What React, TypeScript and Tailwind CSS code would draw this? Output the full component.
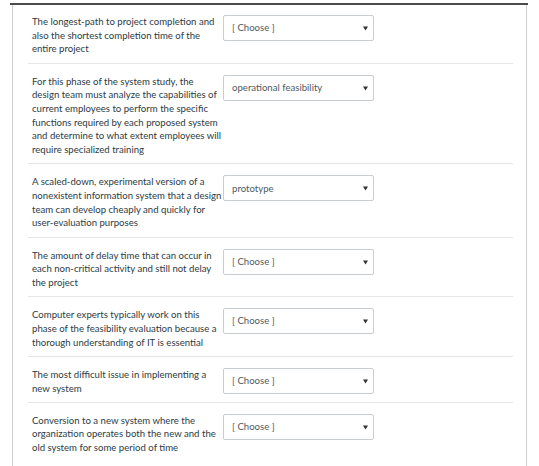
import React from 'react';

const ROWS: Array<{ text: string; answer: string }> = [
  {
    text: 'The longest-path to project completion and also the shortest completion time of the entire project',
    answer: '[ Choose ]',
  },
  {
    text: 'For this phase of the system study, the\ndesign team must analyze the capabilities of current employees to perform the specific functions required by each proposed system and determine to what extent employees will require specialized training',
    answer: 'operational feasibility',
  },
  {
    text: 'A scaled-down, experimental version of a nonexistent information system that a design team can develop cheaply and quickly for user-evaluation purposes',
    answer: 'prototype',
  },
  {
    text: 'The amount of delay time that can occur in each non-critical activity and still not delay the project',
    answer: '[ Choose ]',
  },
  {
    text: 'Computer experts typically work on this phase of the feasibility evaluation because a thorough understanding of IT is essential',
    answer: '[ Choose ]',
  },
  {
    text: 'The most difficult issue in implementing a new system',
    answer: '[ Choose ]',
  },
  {
    text: 'Conversion to a new system where the organization operates both the new and the old system for some period of time',
    answer: '[ Choose ]',
  },
];

function FakeSelect({ value }: { value: string }) {
  return (
    <div className="ml-[-2px] w-[151px] h-[26px] shrink-0 border border-[#c7cdd1] rounded-[2px] bg-white flex items-center justify-between pl-[8px] pr-[5px] text-[#4f5a61]">
      <span className="text-[9.6px] leading-none">{value}</span>
      <svg width="5" height="5" viewBox="0 0 5 5" className="mt-[1px]">
        <path d="M0 0.5 L5 0.5 L2.5 4.5 Z" fill="#333" />
      </svg>
    </div>
  );
}

export default function App() {
  return (
    <div className="w-[539px] h-[466px] bg-white overflow-hidden font-['Lato','Liberation_Sans',sans-serif] text-[#2d3b45]">
      <div className="h-[3px]" />
      <div className="ml-[10px] w-[518px] h-[2px] bg-[#4a4a4a]" />
      <div className="ml-[12px] w-[515px] h-[470px] border-x border-[#cfcfcf]">
        {ROWS.map((row, idx) => (
          <div
            key={idx}
            className={`ml-[15px] w-[485px] flex items-start pb-[6.5px] ${
              idx === 0 ? 'pt-[10px]' : 'pt-[11px]'
            } ${idx < ROWS.length - 1 ? 'border-b border-[#e6e6e6]' : ''}`}
          >
            <p className="w-[197px] pl-[4px] text-[9.6px] leading-[13.7px] shrink-0 whitespace-pre-line">
              {row.text}
            </p>
            <FakeSelect value={row.answer} />
          </div>
        ))}
      </div>
    </div>
  );
}
